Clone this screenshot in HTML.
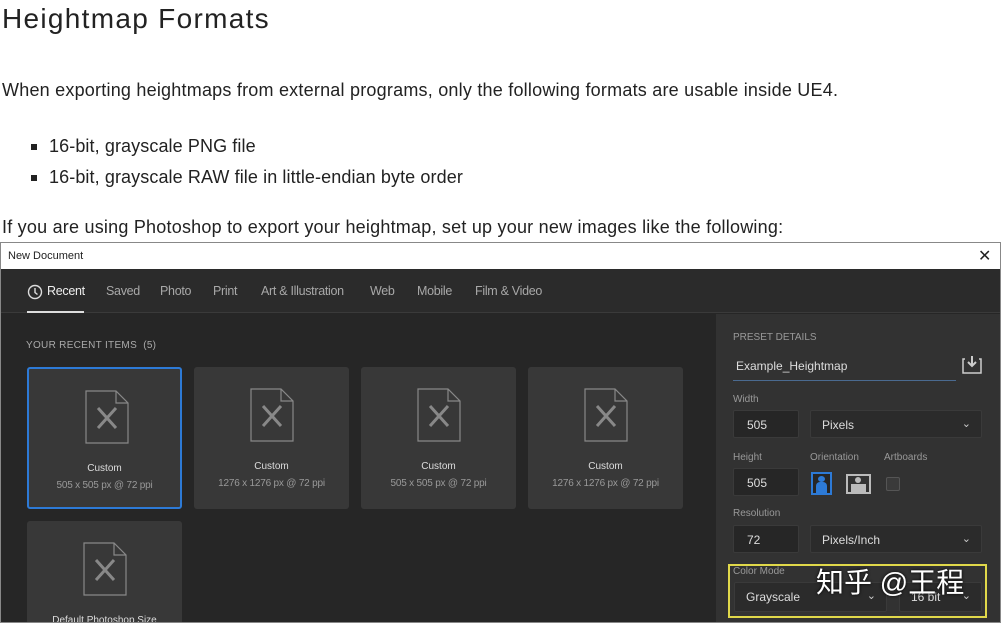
<!DOCTYPE html><html><head><meta charset="utf-8"><style>
*{margin:0;padding:0;box-sizing:border-box}
body{width:1001px;height:623px;overflow:hidden;background:#fff;font-family:"Liberation Sans","Noto Sans CJK SC",sans-serif;color:#222;position:relative}
.a{position:absolute;white-space:nowrap}
h1{position:absolute;left:2px;top:3px;font-size:28px;font-weight:normal;color:#222;letter-spacing:1.3px}
.p{font-size:18px;color:#222;letter-spacing:.22px}
.bl{position:absolute;width:6px;height:6px;background:#222}
.win{position:absolute;left:0;top:242px;width:1001px;height:381px;border:1px solid #888;background:#262626;overflow:hidden}
.tb{position:absolute;left:0;top:0;width:1001px;height:26px;background:#fff;font-size:11px;color:#222}
.tabs{position:absolute;left:0;top:26px;width:1001px;height:44px;background:#2b2b2b;border-bottom:1px solid #3a3a3a}
.t{position:absolute;top:15px;font-size:12.5px;color:#a8a8a8;letter-spacing:-.3px}
.card{position:absolute;width:155px;height:142px;background:#383838;border-radius:3px;overflow:hidden}
.card .n{position:absolute;width:100%;text-align:center;top:94px;font-size:10px;color:#ddd}
.card .s{position:absolute;width:100%;text-align:center;top:111px;font-size:10px;color:#999;letter-spacing:-.2px}
.card svg{position:absolute;left:56px;top:21px}
.rp{position:absolute;left:715px;top:71px;width:286px;height:310px;background:#323232}
.lb{position:absolute;font-size:10px;color:#999}
.in{position:absolute;background:#262626;border:1px solid #3a3a3a;border-radius:2px;font-size:12px;color:#ddd;padding:7px 13px}
.dd{position:absolute;background:#2b2b2b;border:1px solid #3a3a3a;border-radius:2px;font-size:12px;color:#ddd;padding:7px 11px}
.ch{position:absolute;right:10px;top:6px;font-size:11px;color:#ccc}
</style></head><body>
<h1>Heightmap Formats</h1>
<div class="a p" style="left:2px;top:80px">When exporting heightmaps from external programs, only the following formats are usable inside UE4.</div>
<div class="bl" style="left:31px;top:144px"></div><div class="a p" style="left:49px;top:136px;letter-spacing:.1px">16-bit, grayscale PNG file</div>
<div class="bl" style="left:31px;top:175px"></div><div class="a p" style="left:49px;top:167px;letter-spacing:.1px">16-bit, grayscale RAW file in little-endian byte order</div>
<div class="a p" style="left:2px;top:217px">If you are using Photoshop to export your heightmap, set up your new images like the following:</div>
<div class="win">
<div class="tb"><span class="a" style="left:7px;top:7px">New Document</span><span class="a" style="left:977px;top:3px;font-size:16px">✕</span></div>
<div class="tabs">
<svg class="a" style="left:26px;top:15px" width="16" height="16" viewBox="0 0 16 16"><circle cx="8" cy="8" r="6.5" fill="none" stroke="#ddd" stroke-width="1.4"/><path d="M8 4v4.5l2.5 2" fill="none" stroke="#ddd" stroke-width="1.4"/></svg>
<span class="t" style="left:46px;color:#eee">Recent</span>
<div class="a" style="left:26px;top:42px;width:57px;height:2px;background:#ddd"></div>
<span class="t" style="left:105px">Saved</span><span class="t" style="left:159px">Photo</span><span class="t" style="left:212px">Print</span><span class="t" style="left:260px">Art &amp; Illustration</span><span class="t" style="left:369px">Web</span><span class="t" style="left:416px">Mobile</span><span class="t" style="left:474px">Film &amp; Video</span>
</div>
<div class="a" style="left:25px;top:97px;font-size:10px;color:#aaa;letter-spacing:.3px">YOUR RECENT ITEMS&nbsp;&nbsp;(5)</div>
<div class="card" style="left:26px;top:124px;border:2px solid #2d7ad6"><svg width="44" height="54" viewBox="0 0 44 54"><path d="M1 1h30l12 12v40H1z M31 1v12h12" fill="none" stroke="#888" stroke-width="1.2"/><path d="M13 18l18 20M31 18l-18 20" stroke="#888" stroke-width="3" fill="none"/></svg><div class="n">Custom</div><div class="s">505 x 505 px @ 72 ppi</div></div>
<div class="card" style="left:193px;top:124px"><svg width="44" height="54" viewBox="0 0 44 54"><path d="M1 1h30l12 12v40H1z M31 1v12h12" fill="none" stroke="#888" stroke-width="1.2"/><path d="M13 18l18 20M31 18l-18 20" stroke="#888" stroke-width="3" fill="none"/></svg><div class="n">Custom</div><div class="s">1276 x 1276 px @ 72 ppi</div></div>
<div class="card" style="left:360px;top:124px"><svg width="44" height="54" viewBox="0 0 44 54"><path d="M1 1h30l12 12v40H1z M31 1v12h12" fill="none" stroke="#888" stroke-width="1.2"/><path d="M13 18l18 20M31 18l-18 20" stroke="#888" stroke-width="3" fill="none"/></svg><div class="n">Custom</div><div class="s">505 x 505 px @ 72 ppi</div></div>
<div class="card" style="left:527px;top:124px"><svg width="44" height="54" viewBox="0 0 44 54"><path d="M1 1h30l12 12v40H1z M31 1v12h12" fill="none" stroke="#888" stroke-width="1.2"/><path d="M13 18l18 20M31 18l-18 20" stroke="#888" stroke-width="3" fill="none"/></svg><div class="n">Custom</div><div class="s">1276 x 1276 px @ 72 ppi</div></div>
<div class="card" style="left:26px;top:278px;height:103px"><svg width="44" height="54" viewBox="0 0 44 54"><path d="M1 1h30l12 12v40H1z M31 1v12h12" fill="none" stroke="#888" stroke-width="1.2"/><path d="M13 18l18 20M31 18l-18 20" stroke="#888" stroke-width="3" fill="none"/></svg><div class="n">Default Photoshop Size</div></div>
<div class="rp">
<div class="lb" style="left:17px;top:18px">PRESET DETAILS</div>
<div class="a" style="left:20px;top:45px;font-size:12px;color:#ddd">Example_Heightmap</div>
<div class="a" style="left:17px;top:66px;width:223px;height:1px;background:#4a6a90"></div>
<svg class="a" style="left:245px;top:41px" width="22" height="20" viewBox="0 0 22 20"><path d="M4 4H2v14h18V4h-2" fill="none" stroke="#ccc" stroke-width="1.5"/><path d="M11 1v10M7 7l4 4 4-4" fill="none" stroke="#ccc" stroke-width="2"/></svg>
<div class="lb" style="left:17px;top:80px">Width</div>
<div class="in" style="left:17px;top:96px;width:66px;height:28px">505</div>
<div class="dd" style="left:94px;top:96px;width:172px;height:28px">Pixels<span class="ch">&#8964;</span></div>
<div class="lb" style="left:17px;top:138px">Height</div><div class="lb" style="left:94px;top:138px">Orientation</div><div class="lb" style="left:168px;top:138px">Artboards</div>
<div class="in" style="left:17px;top:154px;width:66px;height:28px">505</div>
<div class="a" style="left:95px;top:158px;width:21px;height:23px;border:2px solid #2d7ad6;background:#262626"><div class="a" style="left:5px;top:2px;width:7px;height:6px;border-radius:50%;background:#2d7ad6"></div><div class="a" style="left:3px;top:8px;width:11px;height:11px;background:#2d7ad6;border-radius:4px 4px 0 0"></div></div>
<div class="a" style="left:130px;top:160px;width:25px;height:20px;border:2px solid #bbb"><div class="a" style="left:7px;top:1px;width:6px;height:6px;border-radius:50%;background:#bbb"></div><div class="a" style="left:3px;top:8px;width:15px;height:8px;background:#bbb"></div></div>
<div class="a" style="left:170px;top:163px;width:14px;height:14px;border:1px solid #555;border-radius:2px;background:#3a3a3a"></div>
<div class="lb" style="left:17px;top:194px">Resolution</div>
<div class="in" style="left:17px;top:211px;width:66px;height:28px">72</div>
<div class="dd" style="left:94px;top:211px;width:172px;height:28px">Pixels/Inch<span class="ch">&#8964;</span></div>
<div class="a" style="left:12px;top:250px;width:259px;height:54px;border:2px solid #e0d84a"></div>
<div class="lb" style="left:17px;top:252px">Color Mode</div>
<div class="dd" style="left:18px;top:268px;width:153px;height:30px;padding-left:11px">Grayscale<span class="ch">&#8964;</span></div>
<div class="dd" style="left:183px;top:268px;width:83px;height:30px">16 bit<span class="ch">&#8964;</span></div>
<div class="a" style="left:100px;top:247px;font-size:28px;color:#fff;text-shadow:0 0 3px #000">知乎 @王程</div>
</div>
</div>
</body></html>
